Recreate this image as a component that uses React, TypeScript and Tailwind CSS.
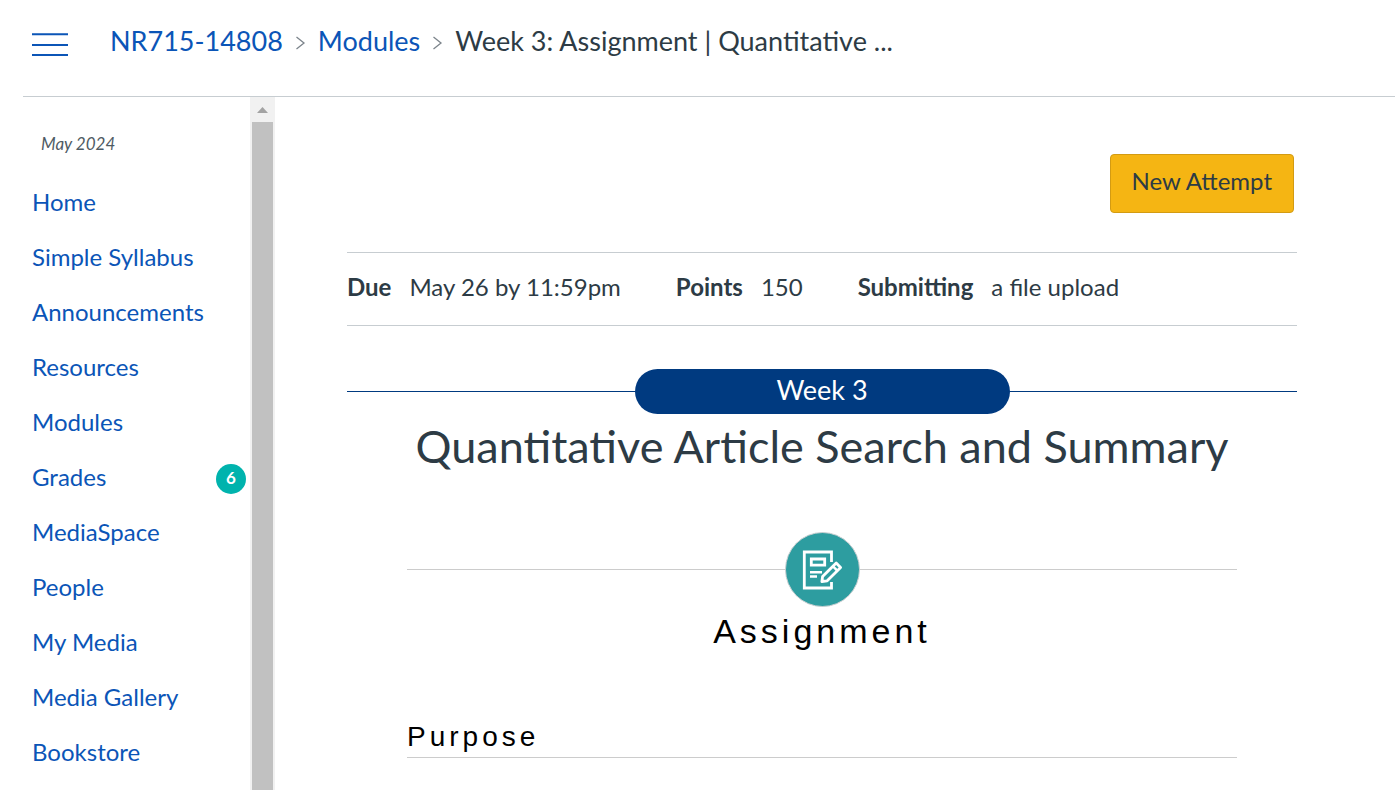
import React from 'react';

type NavItem = { label: string; badge?: number };

const navItems: NavItem[] = [
  { label: 'Home' },
  { label: 'Simple Syllabus' },
  { label: 'Announcements' },
  { label: 'Resources' },
  { label: 'Modules' },
  { label: 'Grades', badge: 6 },
  { label: 'MediaSpace' },
  { label: 'People' },
  { label: 'My Media' },
  { label: 'Media Gallery' },
  { label: 'Bookstore' },
];

const details = [
  { term: 'Due', value: 'May 26 by 11:59pm' },
  { term: 'Points', value: '150' },
  { term: 'Submitting', value: 'a file upload' },
];

function Chevron() {
  return (
    <svg className="mt-1 h-4 w-[35px] shrink-0" viewBox="0 0 35 16" fill="none" stroke="#7c848b" strokeWidth="1.3" aria-hidden="true">
      <path d="M13.500 2 21 8l-7.500 6" />
    </svg>
  );
}

function Header() {
  return (
    <header className="ml-[23px] flex h-[97px] items-start border-b border-[#c7cdd1] pl-[9px]">
      <button type="button" aria-label="Course navigation menu" className="mt-8 h-6 w-9 shrink-0 text-[#0b55b7]">
        <svg viewBox="0 0 36 24" className="h-6 w-9" stroke="currentColor" strokeWidth="1.9" aria-hidden="true">
          <path d="M0 2.200h36M0 13h36M0 23h36" />
        </svg>
      </button>
      <nav aria-label="Breadcrumb" className="mt-[23px] ml-[42px] flex h-9 items-center text-[27px] whitespace-nowrap text-[#0b55b7]">
        <a href="#course">NR715-14808</a>
        <Chevron />
        <a href="#modules">Modules</a>
        <Chevron />
        <span className="text-[#2d3b45]">Week 3: Assignment | Quantitative ...</span>
      </nav>
    </header>
  );
}

function Sidebar() {
  return (
    <aside className="flex w-[275px] shrink-0">
      <div className="min-w-0 flex-1 pt-9 pr-1 pl-8">
        <p className="pl-[9px] text-[17px] leading-[22px] text-[#4f5b64] italic">May 2024</p>
        <nav aria-label="Course" className="mt-[19px]">
          <ul>
            {navItems.map((item) => (
              <li key={item.label}>
                <a href="#section" className="flex h-[55px] items-center justify-between text-2xl text-[#0b55b7]">
                  {item.label}
                  {item.badge && (
                    <span className="mt-1 flex size-[30px] items-center justify-center rounded-full bg-[#00b3ad] text-[17px] font-bold text-white">
                      {item.badge}
                    </span>
                  )}
                </a>
              </li>
            ))}
          </ul>
        </nav>
      </div>
      <div className="flex w-[25px] flex-col bg-[#f1f1f1] pr-[2px] pl-[2px]" aria-hidden="true">
        <svg className="h-[25px] w-[21px]" viewBox="0 0 21 25">
          <path d="M10.500 10 16 16H5z" fill="#a3a3a3" />
        </svg>
        <div className="flex-1 bg-[#c1c1c1]" />
      </div>
    </aside>
  );
}

function AssignmentIcon() {
  return (
    <svg className="size-[75px]" viewBox="0 0 75 75" fill="none" stroke="#fff" aria-hidden="true">
      <circle cx="37.500" cy="37.500" r="37" fill="#2d9da0" stroke="#c9cfd1" strokeWidth="1" />
      <path d="M46.500 30V20H19.300v36h27.200v-6" strokeWidth="2.800" />
      <path d="M26.300 27h13.400v6.200H26.300z" strokeWidth="2.800" />
      <path d="M25 40.300h12M25 44.500h7" strokeWidth="2.500" />
      <path d="M51.200 31 55.600 35.400 42.200 48.800 36.900 49.500 37.600 44.400z" strokeWidth="2.800" strokeLinejoin="round" />
      <path d="M48 34.300 52.300 38.600" strokeWidth="2.500" />
    </svg>
  );
}

export default function App() {
  return (
    <div className="flex min-h-screen flex-col overflow-x-hidden bg-white font-['Lato',sans-serif] text-[#2d3b45]">
      <Header />
      <div className="flex flex-1">
        <Sidebar />
        <main className="min-w-0 flex-1 pt-[57px] pr-[98px] pl-[72px]">
          <div className="flex justify-end pr-[3px]">
            <button type="button" className="h-[59px] rounded border border-[#d39b12] bg-[#f5b513] px-[21px] pb-1.5 text-2xl">
              New Attempt
            </button>
          </div>
          <dl className="mt-[39px] flex h-[74px] items-center gap-[55px] border-y border-[#c7cdd1] pb-1 text-2xl whitespace-nowrap">
            {details.map((detail) => (
              <div key={detail.term} className="flex gap-[18px]">
                <dt className="font-bold">{detail.term}</dt>
                <dd>{detail.value}</dd>
              </div>
            ))}
          </dl>
          <div className="mt-[43px] flex items-center">
            <span className="h-px flex-1 bg-[#003a80]" />
            <p className="flex h-[45px] w-[375px] items-center justify-center rounded-full bg-[#003a80] pb-0.5 text-[27px] text-white">
              Week 3
            </p>
            <span className="h-px flex-1 bg-[#003a80]" />
          </div>
          <h1 className="mt-0.5 text-center text-[45px] leading-[60px]">Quantitative Article Search and Summary</h1>
          <section className="mt-14 px-[60px] font-['Liberation_Sans',sans-serif] text-black">
            <div className="flex items-center">
              <span className="h-px flex-1 bg-[#cccccc]" />
              <AssignmentIcon />
              <span className="h-px flex-1 bg-[#cccccc]" />
            </div>
            <h2 className="mt-1 text-center text-[34px] leading-[40px] tracking-[4px]">Assignment</h2>
            <h3 className="mt-[66px] border-b border-[#cccccc] text-[28px] leading-[40px] tracking-[4px]">Purpose</h3>
          </section>
        </main>
      </div>
    </div>
  );
}
